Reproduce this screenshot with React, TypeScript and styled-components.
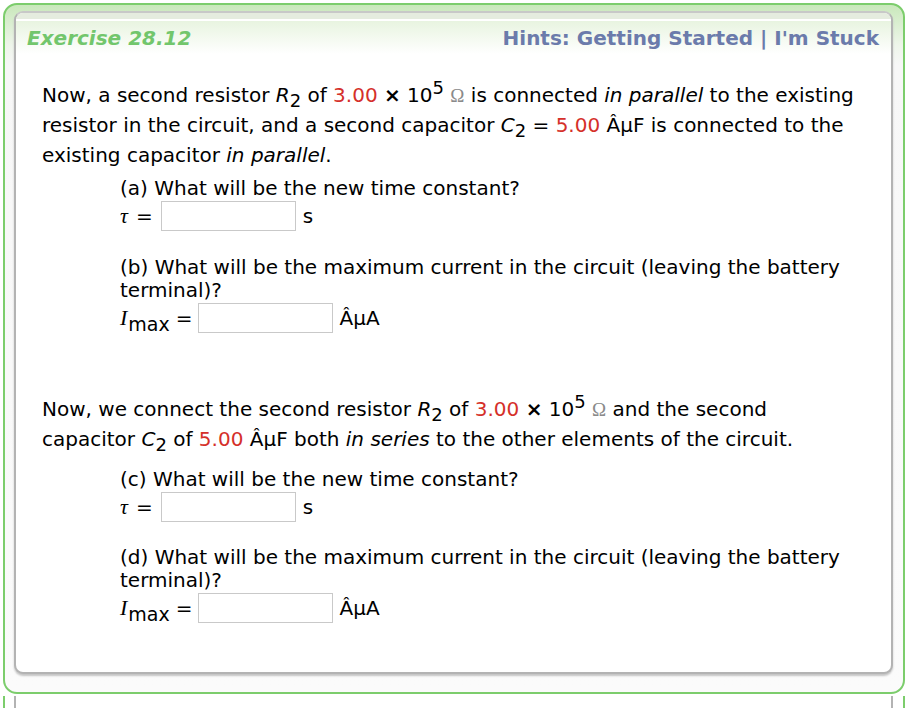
import React from "react";
import styled, { createGlobalStyle } from "styled-components";

const Global = createGlobalStyle`
  html, body { margin: 0; padding: 0; background: #ffffff; }
  body { font-family: "DejaVu Sans", Verdana, sans-serif; color: #000; overflow: hidden; }
`;

const Frame = styled.div`
  margin: 3px 5px 0 3px;
  border: 2px solid #7ccd6c;
  border-radius: 14px;
  background: linear-gradient(#c9e8bb 0px, #eef5ea 40px, #f7f7f7 60px, #fbfbfb 100%);
  padding: 6px 10px 0 9px;
  box-sizing: border-box;
  height: 691px;
`;

const Card = styled.div`
  height: 663px;
  box-sizing: border-box;
  border: 2px solid #b3b3b3;
  border-top-color: #c8c8c8;
  border-radius: 9px;
  background: #ffffff;
  box-shadow: 0 2px 2px #c4c4c4;
  overflow: hidden;
  display: flex;
  flex-direction: column;
`;

const HeaderTop = styled.div`
  height: 6px;
  background: #e5ecdf;
  border-bottom: 2px solid #ffffff;
`;

const Header = styled.div`
  height: 33px;
  display: flex;
  align-items: center;
  justify-content: space-between;
  padding: 0 12px 0 11px;
  background: linear-gradient(#e8f4e0, #ffffff);
`;

const Title = styled.span`
  font-weight: bold;
  font-style: italic;
  font-size: 20px;
  color: #72c66c;
`;

const Hints = styled.span`
  font-weight: bold;
  font-size: 20px;
  color: #6b7bab;
`;

const Body = styled.div`
  padding: 26px 20px 0 26px;
  font-size: 20px;
`;

const Para = styled.p`
  margin: 0;
  line-height: 30px;
  width: 816px;
`;

const Question = styled.div<{ $top: number }>`
  margin-left: 78px;
  line-height: 23px;
  margin-top: ${(p) => p.$top}px;
`;

const AnswerRow = styled.div`
  display: flex;
  align-items: center;
  height: 31px;
  margin-left: 78px;
`;

const Label = styled.span`
  white-space: nowrap;
`;

const Sym = styled.span`
  font-family: "Liberation Serif", "Times New Roman", serif;
  font-style: italic;
  font-size: 22px;
`;

const Sub = styled.span`
  font-size: 19px;
  position: relative;
  top: 6px;
  margin-left: 1px;
`;

const Eq = styled.span<{ $l: number; $r: number }>`
  margin: 0 ${(p) => p.$r}px 0 ${(p) => p.$l}px;
`;

const Box = styled.div`
  width: 133px;
  height: 28px;
  border: 1px solid #c9c9c9;
  background: #fff;
`;

const Unit = styled.span`
  margin-left: 7px;
`;

const Red = styled.span`
  color: #d5302a;
`;

const Var = styled.i``;

const SmallSub = styled.span`
  font-size: 18px;
  line-height: 0;
  position: relative;
  top: 5px;
`;

const Sup = styled.span`
  font-size: 18px;
  line-height: 0;
  position: relative;
  top: -8px;
`;

const Ohm = styled.span`
  font-family: "Liberation Serif", serif;
  color: #8a8a8a;
  font-size: 19px;
  line-height: 0;
`;

const Times = styled.span`
  font-weight: bold;
`;

const Spacer = styled.div<{ $h: number }>`
  height: ${(p) => p.$h}px;
`;

const NextFrame = styled.div`
  margin: 2px 5px 0 3px;
  height: 30px;
  border-left: 2px solid #7ccd6c;
  border-right: 2px solid #7ccd6c;
  padding: 0 10px 0 9px;
`;

const NextCard = styled.div`
  height: 30px;
  border-left: 2px solid #b3b3b3;
  border-right: 2px solid #b3b3b3;
`;

function TauRow() {
  return (
    <AnswerRow>
      <Sym>τ</Sym>
      <Eq $l={8} $r={8}>=</Eq>
      <Box />
      <Unit>s</Unit>
    </AnswerRow>
  );
}

function ImaxRow() {
  return (
    <AnswerRow>
      <Label>
        <Sym>I</Sym>
        <Sub>max</Sub>
      </Label>
      <Eq $l={6} $r={5}>=</Eq>
      <Box />
      <Unit>ÂµA</Unit>
    </AnswerRow>
  );
}

export default function App() {
  return (
    <>
      <Global />
      <Frame>
        <Card>
          <HeaderTop />
          <Header>
            <Title>Exercise 28.12</Title>
            <Hints>Hints: Getting Started | I'm Stuck</Hints>
          </Header>
          <Body>
            <Para>
              Now, a second resistor <Var>R</Var>
              <SmallSub>2</SmallSub> of <Red>3.00</Red> <Times>×</Times> 10
              <Sup>5</Sup> <Ohm>Ω</Ohm> is connected <Var>in parallel</Var> to the
              existing resistor in the circuit, and a second capacitor <Var>C</Var>
              <SmallSub>2</SmallSub> = <Red>5.00</Red> ÂµF is connected to the existing
              capacitor <Var>in parallel</Var>.
            </Para>
            <Question $top={7}>(a) What will be the new time constant?</Question>
            <TauRow />
            <Question $top={25}>
              (b) What will be the maximum current in the circuit (leaving the battery
              terminal)?
            </Question>
            <ImaxRow />
            <Spacer $h={61} />
            <Para>
              Now, we connect the second resistor <Var>R</Var>
              <SmallSub>2</SmallSub> of <Red>3.00</Red> <Times>×</Times> 10
              <Sup>5</Sup> <Ohm>Ω</Ohm> and the second capacitor <Var>C</Var>
              <SmallSub>2</SmallSub> of <Red>5.00</Red> ÂµF both <Var>in series</Var> to
              the other elements of the circuit.
            </Para>
            <Question $top={14}>(c) What will be the new time constant?</Question>
            <TauRow />
            <Question $top={24}>
              (d) What will be the maximum current in the circuit (leaving the battery
              terminal)?
            </Question>
            <ImaxRow />
          </Body>
        </Card>
      </Frame>
      <NextFrame>
        <NextCard />
      </NextFrame>
    </>
  );
}
